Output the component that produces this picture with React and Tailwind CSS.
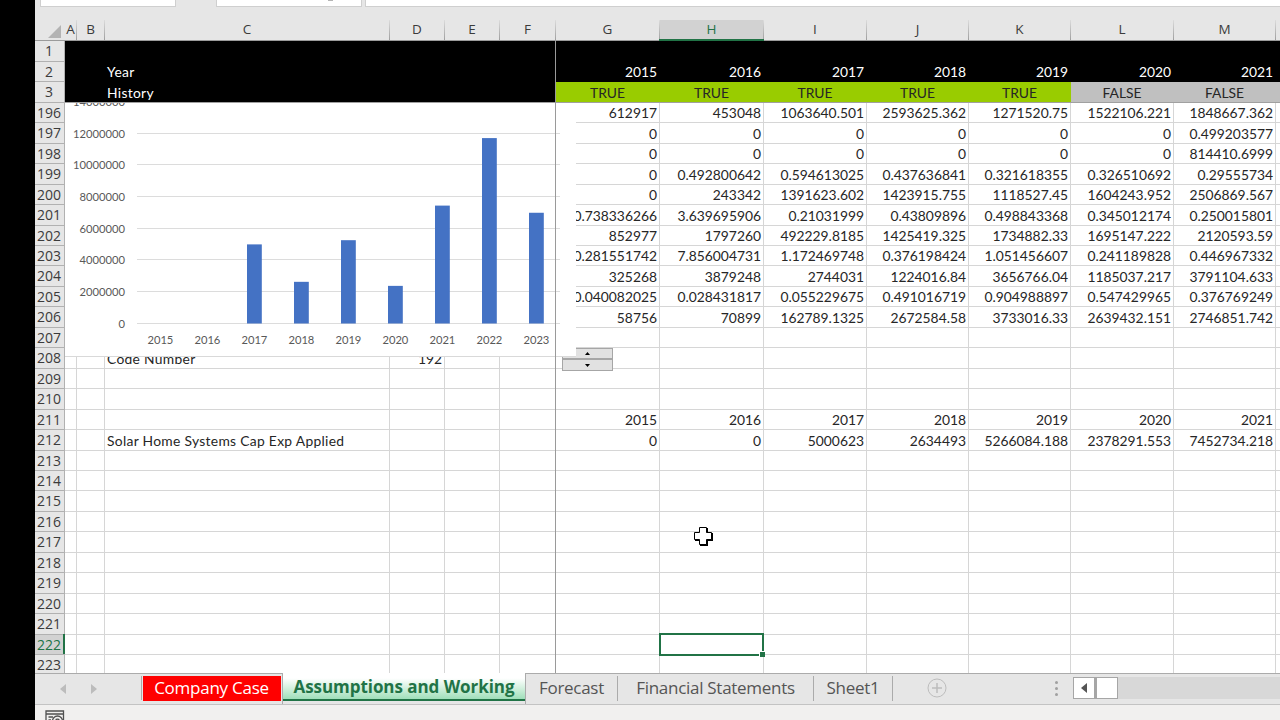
import React from 'react';
import clsx from 'clsx';

const columns = [
  { id: 'A', width: 12 },
  { id: 'B', width: 28 },
  { id: 'C', width: 285 },
  { id: 'D', width: 55 },
  { id: 'E', width: 55 },
  { id: 'F', width: 56 },
  { id: 'G', width: 104 },
  { id: 'H', width: 104 },
  { id: 'I', width: 103 },
  { id: 'J', width: 102 },
  { id: 'K', width: 102 },
  { id: 'L', width: 103 },
  { id: 'M', width: 102 },
];

const valueColumns = ['G', 'H', 'I', 'J', 'K', 'L', 'M'];

const toCells = (values) => Object.fromEntries(values.map((v, i) => [valueColumns[i], v]));

const years = ['2015', '2016', '2017', '2018', '2019', '2020', '2021'];

const cellData = {
  2: { C: 'Year', ...toCells(years) },
  3: { C: 'History', ...toCells(['TRUE', 'TRUE', 'TRUE', 'TRUE', 'TRUE', 'FALSE', 'FALSE']) },
  196: toCells(['612917', '453048', '1063640.501', '2593625.362', '1271520.75', '1522106.221', '1848667.362']),
  197: toCells(['0', '0', '0', '0', '0', '0', '0.499203577']),
  198: toCells(['0', '0', '0', '0', '0', '0', '814410.6999']),
  199: toCells(['0', '0.492800642', '0.594613025', '0.437636841', '0.321618355', '0.326510692', '0.29555734']),
  200: toCells(['0', '243342', '1391623.602', '1423915.755', '1118527.45', '1604243.952', '2506869.567']),
  201: toCells(['0.738336266', '3.639695906', '0.21031999', '0.43809896', '0.498843368', '0.345012174', '0.250015801']),
  202: toCells(['852977', '1797260', '492229.8185', '1425419.325', '1734882.33', '1695147.222', '2120593.59']),
  203: toCells(['0.281551742', '7.856004731', '1.172469748', '0.376198424', '1.051456607', '0.241189828', '0.446967332']),
  204: toCells(['325268', '3879248', '2744031', '1224016.84', '3656766.04', '1185037.217', '3791104.633']),
  205: toCells(['0.040082025', '0.028431817', '0.055229675', '0.491016719', '0.904988897', '0.547429965', '0.376769249']),
  206: toCells(['58756', '70899', '162789.1325', '2672584.58', '3733016.33', '2639432.151', '2746851.742']),
  208: { C: 'Code Number', D: '192' },
  211: toCells(years),
  212: {
    C: 'Solar Home Systems Cap Exp Applied',
    ...toCells(['0', '0', '5000623', '2634493', '5266084.188', '2378291.553', '7452734.218']),
  },
};

const rowNumbers = [1, 2, 3, ...Array.from({ length: 28 }, (_, i) => 196 + i)];

// rows are 20.45px high on average, rounded to whole pixels; the first one is a pixel taller
const rowLine = (k) => (k === 0 ? 0 : Math.floor(20.45 * k) + 1);
const rowHeight = (index) => rowLine(index + 1) - rowLine(index);

const chartData = [
  { year: 2015, value: 0 },
  { year: 2016, value: 0 },
  { year: 2017, value: 5000623 },
  { year: 2018, value: 2634493 },
  { year: 2019, value: 5266084 },
  { year: 2020, value: 2378291 },
  { year: 2021, value: 7452734 },
  { year: 2022, value: 11720000 },
  { year: 2023, value: 7000000 },
];

function FormulaBar() {
  return (
    <div className="flex h-5 shrink-0 items-start pl-[5px]">
      <div className="h-[7px] w-[136px] border border-t-0 border-[#cfcfcf] bg-white" />
      <div className="relative ml-[40px] h-[7px] w-[146px] border border-t-0 border-[#cfcfcf] bg-white">
        <div className="absolute left-[111px] top-0 h-px w-[5px] bg-[#b5b5b5]" />
      </div>
      <div className="ml-[3px] h-[7px] flex-1 border-b border-l border-[#cfcfcf] bg-white" />
    </div>
  );
}

function ColumnHeader() {
  return (
    <div className="flex h-[21px] shrink-0 border-b border-[#9b9b9b] font-['Open_Sans',sans-serif] text-[13.5px] text-[#3b3b3b]">
      <div className="flex w-[30px] shrink-0 items-end justify-end pb-[2px] pr-[4px]">
        <svg width="13" height="13" viewBox="0 0 13 13">
          <path d="M13 0V13H0Z" fill="#b3b3b3" />
        </svg>
      </div>
      {columns.map((col) => (
        <div
          key={col.id}
          style={{ width: col.width }}
          className={clsx(
            'relative flex shrink-0 items-center justify-center pr-px leading-none',
            col.id === 'H' && 'bg-[#d2d2d2] text-[#217346]'
          )}
        >
          {col.id}
          <div className="absolute bottom-0 right-0 top-0 w-px bg-linear-to-b from-[#dcdcdc] to-[#9f9f9f]" />
          {col.id === 'H' && <div className="absolute -bottom-px -left-px right-0 h-[2px] bg-[#217346]" />}
        </div>
      ))}
    </div>
  );
}

function Selection() {
  return (
    <div className="absolute -left-px -top-[2px] z-10 h-[23px] w-[105px] border-2 border-[#217346]">
      <div className="absolute -bottom-[3px] -right-[3px] h-[6px] w-[6px] border-l border-t border-white bg-[#217346]" />
    </div>
  );
}

function Cell({ row, col }) {
  const text = cellData[row]?.[col.id];
  const isFrozenRow = row <= 3;
  const isFlag = row === 3 && col.id >= 'G';

  return (
    <div
      style={{ width: col.width }}
      className={clsx(
        'relative flex shrink-0 items-center whitespace-nowrap pl-[2px] leading-none',
        col.id === 'C' ? 'justify-start tracking-[0.3px]' : isFlag ? 'justify-center pr-[3px]' : 'justify-end',
        !isFrozenRow && 'border-b border-r border-[#d6d6d6] pr-[2px] pt-px',
        isFrozenRow && !isFlag && 'bg-black pr-[3px] text-white',
        isFlag && (col.id <= 'K' ? 'bg-[#99cc00]' : 'bg-[#c0c0c0]')
      )}
    >
      {text}
      {row === 222 && col.id === 'H' && <Selection />}
    </div>
  );
}

function Chart() {
  const zeroY = 221.5;
  const perUnit = 31.64 / 2000000;
  return (
    <div className="absolute left-[30px] top-[62px] h-[254px] w-[511px] overflow-hidden border-b border-[#d9d9d9] bg-white">
      <svg width="511" height="254" className="font-['Lato',sans-serif] text-[11.2px]" fill="#595959">
        {Array.from({ length: 8 }, (_, i) => {
          const y = Math.round(zeroY - i * 31.64) - 1.5;
          return (
            <g key={i}>
              {i < 7 && <line x1="72" x2="495" y1={y} y2={y} stroke="#dcdcdc" />}
              <text x="60" y={y + 4.5} textAnchor="end">{i * 2000000}</text>
            </g>
          );
        })}
        {chartData.map((d, i) => {
          const center = 95.4 + i * 47;
          const height = d.value * perUnit;
          return (
            <g key={d.year}>
              <rect x={center - 7.4} y={220.5 - height} width="14.8" height={height} fill="#4472c4" />
              <text x={center} y="241" textAnchor="middle">{d.year}</text>
            </g>
          );
        })}
      </svg>
    </div>
  );
}

function SpinButton() {
  return (
    <div className="absolute left-[527px] top-[307px] flex w-[51px] flex-col">
      <div className="flex h-[11px] items-center justify-center border border-[#a6a6a6] bg-[#e1e1e1]">
        <svg width="5" height="3"><path d="M0 3L2.5 0L5 3Z" fill="#000" /></svg>
      </div>
      <div className="flex h-[12px] items-center justify-center border border-[#a6a6a6] bg-[#e1e1e1]">
        <svg width="5" height="3"><path d="M0 0L2.5 3L5 0Z" fill="#000" /></svg>
      </div>
    </div>
  );
}

function Sheet() {
  return (
    <div className="relative h-[632px] shrink-0 overflow-hidden bg-white font-['Lato',sans-serif] text-[13.85px] text-[#262626]">
      {rowNumbers.map((row, index) => (
        <div key={row} className="flex" style={{ height: rowHeight(index) }}>
          <div
            className={clsx(
              "relative flex w-[30px] shrink-0 items-center justify-center border-b border-r border-[#b1b1b1] pr-[1px] font-['Open_Sans',sans-serif] text-[14px] leading-none",
              row === 222 ? 'bg-[#d2d2d2] text-[#217346]' : 'bg-[#e6e6e6] text-[#3b3b3b]'
            )}
          >
            {row}
            {row === 222 && <div className="absolute -right-px -top-px bottom-0 w-[2px] bg-[#217346]" />}
          </div>
          {columns.map((col) => (
            <Cell key={col.id} row={row} col={col} />
          ))}
          {/* left edge of column N */}
          <div
            className={clsx(
              'flex-1',
              row < 3 && 'bg-black',
              row === 3 && 'bg-[#c0c0c0]',
              row > 3 && 'border-b border-[#d6d6d6]'
            )}
          />
        </div>
      ))}
      <SpinButton />
      <Chart />
      {/* freeze pane lines */}
      <div className="absolute left-[30px] right-0 top-[61px] h-px bg-[#a0a0a0]" />
      <div className="absolute bottom-0 left-[520px] top-0 w-px bg-[#9a9a9a]" />
      <svg className="absolute left-[659px] top-[486px]" width="20" height="20" viewBox="0 0 20 20">
        <path d="M6 1H14V6H19V14H14V19H6V14H1V6H6Z" fill="#000" />
        <path d="M5.5 0.5H12.5V5.5H17.5V12.5H12.5V17.5H5.5V12.5H0.5V5.5H5.5Z" fill="#fff" stroke="#000" />
      </svg>
    </div>
  );
}

function SheetTabs() {
  return (
    <div className="flex h-8 shrink-0 border-b border-[#c3c3c3] font-['Open_Sans',sans-serif] text-[17px] leading-none text-[#555]">
      <div className="flex w-[106px] items-center gap-[25px] border-t border-[#ababab] pl-[25px]">
        <svg width="6" height="10"><path d="M6 0V10L0 5Z" fill="#bcbcbc" /></svg>
        <svg width="6" height="10"><path d="M0 0V10L6 5Z" fill="#bcbcbc" /></svg>
      </div>
      <div className="flex w-[142px] border-t border-r border-[#ababab] pt-[2px]">
        <div className="h-[24px] w-px shrink-0 bg-[#ababab]" />
        <div className="ml-px mr-px flex h-[25px] flex-1 items-center justify-center bg-[#ff0000] pb-[3px] pr-px text-white">
          <span className="whitespace-nowrap tracking-[-0.25px]">Company Case</span>
        </div>
      </div>
      <div className="flex h-[28px] w-[242px] items-center justify-center border-b-2 border-[#217346] bg-linear-to-b from-white from-20% to-[#9fdfba] pt-px font-bold text-[#217346]">
        <span className="whitespace-nowrap tracking-[-0.05px]">Assumptions and Working</span>
      </div>
      <div className="flex flex-1 border-l border-t border-[#ababab] py-[2px]">
        <div className="flex h-[25px] w-[92px] items-center justify-center border-r border-[#ababab] pb-[3px]">
          <span className="tracking-[-0.3px]">Forecast</span>
        </div>
        <div className="flex h-[25px] w-[196px] items-center justify-center border-r border-[#ababab] pb-[3px]">
          <span className="whitespace-nowrap tracking-[-0.28px]">Financial Statements</span>
        </div>
        <div className="flex h-[25px] w-[79px] items-center justify-center border-r border-[#ababab] pb-[3px]">
          <span className="tracking-[-0.3px]">Sheet1</span>
        </div>
        <svg className="ml-[34px] mt-[2px]" width="20" height="20" fill="none" stroke="#bdbdbd">
          <circle cx="10" cy="10" r="9" />
          <path d="M10 5V15M5 10H15" strokeWidth="1.5" />
        </svg>
        <div className="ml-[108px] mt-[5px] flex flex-col gap-[3px]">
          <div className="h-[3px] w-[3px] rounded-full bg-[#a0a0a0]" />
          <div className="h-[3px] w-[3px] rounded-full bg-[#a0a0a0]" />
          <div className="h-[3px] w-[3px] rounded-full bg-[#a0a0a0]" />
        </div>
        <div className="ml-[15px] mt-[1px] flex h-[22px] flex-1 bg-[#d8d8d8]">
          <div className="flex w-[22px] items-center justify-center border border-[#a6a6a6] bg-white">
            <svg width="6" height="10"><path d="M6 0V10L0 5Z" fill="#555" /></svg>
          </div>
          <div className="w-[23px] border border-l-2 border-[#a6a6a6] bg-white" />
        </div>
      </div>
    </div>
  );
}

function StatusBar() {
  return (
    <div className="flex-1 bg-[#f1f0ef] pl-[10px] pt-[5px]">
      <svg width="20" height="18" viewBox="0 0 20 18" fill="none" stroke="#505050" strokeWidth="1.3">
        <path d="M1 16V1H18.5V16M1 4H18.5" />
        <path d="M3.5 7H8M3.5 10H6" />
        <circle cx="12.5" cy="11" r="5" />
        <circle cx="12.5" cy="11" r="1.8" />
      </svg>
    </div>
  );
}

export default function App() {
  return (
    <div className="flex h-[720px] w-[1280px] overflow-hidden bg-black">
      <div className="w-[35px] shrink-0" />
      <div className="flex min-w-0 flex-1 flex-col overflow-hidden bg-[#e6e6e6]">
        <FormulaBar />
        <ColumnHeader />
        <Sheet />
        <SheetTabs />
        <StatusBar />
      </div>
    </div>
  );
}
